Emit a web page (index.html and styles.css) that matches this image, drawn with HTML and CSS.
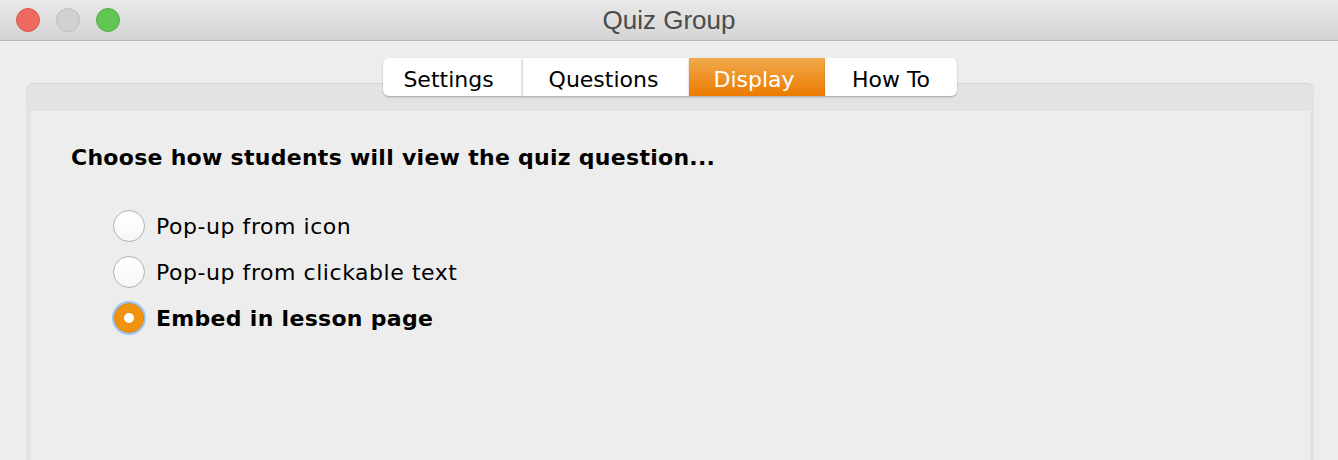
FILE: index.html
```html
<!DOCTYPE html>
<html>
<head>
<meta charset="utf-8">
<link rel="stylesheet" href="styles.css">
</head>
<body>
<div class="window">
  <div class="titlebar">
    <div class="lights">
      <span class="light red"></span>
      <span class="light gray"></span>
      <span class="light green"></span>
    </div>
    <div class="title">Quiz Group</div>
    <div></div>
  </div>
  <div class="main">
    <div class="tabs">
      <div class="tab tab-settings">Settings</div>
      <div class="tab tab-questions">Questions</div>
      <div class="tab tab-display active">Display</div>
      <div class="tab tab-howto">How To</div>
    </div>
    <div class="panel">
      <div class="content">
        <div class="heading">Choose how students will view the quiz question...</div>
        <div class="options">
          <label class="option"><span class="radio"></span><span class="label">Pop-up from icon</span></label>
          <label class="option"><span class="radio"></span><span class="label">Pop-up from clickable text</span></label>
          <label class="option selected"><span class="radio"></span><span class="label">Embed in lesson page</span></label>
        </div>
      </div>
    </div>
  </div>
</div>
</body>
</html>
```

FILE: styles.css
```css
html, body {
  margin: 0;
  padding: 0;
}
body {
  width: 1338px;
  height: 460px;
  overflow: hidden;
  background: #ededed;
  font-family: "DejaVu Sans", Verdana, sans-serif;
}
.window {
  display: flex;
  flex-direction: column;
  height: 460px;
}
.titlebar {
  height: 40px;
  border-bottom: 1px solid #b9b9b9;
  background: linear-gradient(#e9e9e9, #d4d4d4);
  display: grid;
  grid-template-columns: 1fr auto 1fr;
  align-items: center;
}
.lights {
  display: flex;
  gap: 16px;
  padding-left: 16px;
}
.light {
  width: 22px;
  height: 22px;
  border-radius: 50%;
  display: block;
}
.red { background: #ee6a5f; border: 1px solid #d95a4f; }
.gray { background: #d1d1d1; border: 1px solid #bdbdbd; }
.green { background: #62c655; border: 1px solid #53ad46; }
.title {
  font-family: "Liberation Sans", Arial, sans-serif;
  font-size: 26px;
  color: #4b4b4b;
  padding-top: 1px;
}
.main {
  flex: 1;
  display: flex;
  flex-direction: column;
  padding: 17px 24px 0 26px;
}
.tabs {
  display: flex;
  justify-content: center;
  position: relative;
  z-index: 1;
  margin-bottom: -13px;
}
.tabs .tab {
  height: 38px;
  line-height: 43px;
  font-size: 22px;
  color: #000;
  background: #fff;
  text-align: center;
  box-sizing: border-box;
  border-left: 1px solid #dcdcdc;
  box-shadow: 0 1px 2px rgba(0,0,0,0.28);
}
.tab-settings { width: 139px; padding-right: 8px; }
.tab-questions { width: 167px; padding-right: 5px; }
.tab-display { width: 136px; padding-right: 6px; }
.tab-howto { width: 132px; }
.tabs .tab:first-child {
  border-left: none;
  border-radius: 6px 0 0 6px;
}
.tabs .tab:last-child {
  border-radius: 0 6px 6px 0;
}
.tabs .tab.active {
  color: #fff;
  background: linear-gradient(#f1aa4e, #ec7b00);
  border-left: none;
}
.tabs .tab.active + .tab { border-left: none; }
.panel {
  flex: 1;
  display: flex;
  flex-direction: column;
  background: #e3e3e3;
  border-top: 1px solid #d3d3d3;
  border-radius: 7px 7px 0 0;
  padding: 27px 4px 0 5px;
}
.content {
  flex: 1;
  background: #ededed;
  padding: 35px 0 0 40px;
}
.heading {
  font-size: 22px;
  font-weight: bold;
  letter-spacing: 0.28px;
  color: #000;
  line-height: 24px;
}
.options {
  display: flex;
  flex-direction: column;
  gap: 14px;
  padding: 40px 0 0 42px;
}
.option {
  display: flex;
  align-items: center;
  gap: 11px;
  height: 32px;
  font-size: 22px;
  letter-spacing: 0.55px;
  color: #000;
}
.radio {
  width: 30px;
  height: 30px;
  border-radius: 50%;
  border: 1px solid #b3b3b3;
  background: linear-gradient(#ffffff, #f7f7f7);
  box-sizing: content-box;
  display: flex;
  align-items: center;
  justify-content: center;
}
.option.selected .label { font-weight: bold; letter-spacing: 0.3px; }
.option.selected .radio {
  width: 28px;
  height: 28px;
  border: 1px solid #e0860c;
  background: #f0930e;
  box-shadow: 0 0 0 2px #9cc6f3;
  margin-left: 1px;
  margin-right: 1px;
}
.option.selected .radio::after {
  content: "";
  width: 10px;
  height: 10px;
  border-radius: 50%;
  background: #fff;
}
```
